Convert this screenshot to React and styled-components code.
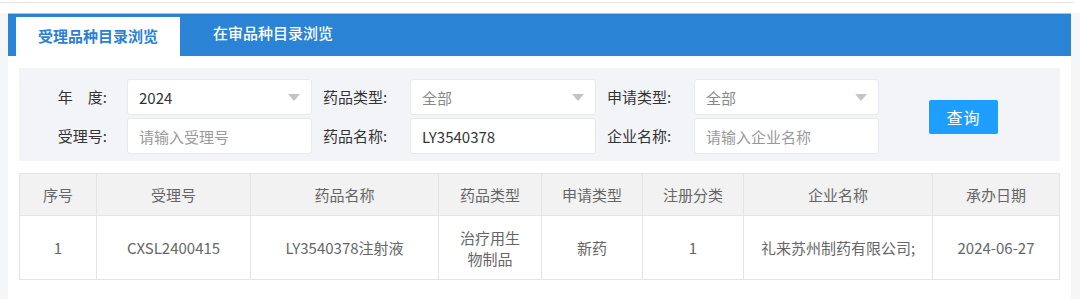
import React from "react";
import styled, { createGlobalStyle } from "styled-components";

const Global = createGlobalStyle`
  html, body { margin: 0; padding: 0; }
  body {
    background: #f5f6f8;
    font-family: "Noto Sans CJK SC", "Microsoft YaHei", sans-serif;
    font-size: 15px;
    color: #333;
  }
  * { box-sizing: border-box; }
`;

const Page = styled.div`
  width: 1080px;
  height: 299px;
  overflow: hidden;
  background: #f5f6f8;
`;

const TopStrip = styled.div`
  height: 13px;
  background: #fff;
  padding-top: 2px;
`;

const TopRule = styled.div`
  height: 1px;
  margin-right: 6px;
  background: #e4e4e4;
`;

const Panel = styled.div`
  margin: 0 9px 0 8px;
  background: #fff;
  height: 286px;
`;

const TabBar = styled.div`
  height: 43px;
  background: #2b83d5;
  border-top: 1px solid #9cc3ea;
  display: flex;
  align-items: flex-end;
  padding-left: 8px;
  gap: 11px;
`;

const Tab = styled.div`
  height: ${(p) => (p.$active ? "39px" : "42px")};
  padding: 0 22px;
  display: flex;
  align-items: center;
  font-size: 15px;
  line-height: 20px;
  padding-bottom: ${(p) => (p.$active ? "1px" : "4px")};
  background: ${(p) => (p.$active ? "#fff" : "transparent")};
  color: ${(p) => (p.$active ? "#2b7fd4" : "#fff")};
  font-weight: ${(p) => (p.$active ? 600 : 500)};
`;

const Body = styled.div`
  padding: 12px 11px 0 11px;
`;

const Filters = styled.div`
  background: #f3f4f8;
  padding: 11px 0 7px;
  display: grid;
  grid-template-columns: 108px 185px 98px 186px 98px 185px auto;
  grid-template-rows: 36px 36px;
  row-gap: 3px;
  align-items: center;
`;

const Label = styled.div`
  font-size: 15px;
  line-height: 20px;
  color: #333;
  white-space: nowrap;
  text-align: ${(p) => (p.$right ? "right" : "left")};
  padding: ${(p) => (p.$right ? "0 20px 0 0" : "0 0 0 11px")};
`;

const Field = styled.div`
  height: 36px;
  background: #fff;
  border: 1px solid #e8e9ee;
  border-radius: 3px;
  display: flex;
  align-items: center;
  padding: 0 11px;
  font-size: 15px;
  color: ${(p) => (p.$muted ? "#888" : "#333")};
  position: relative;
`;

const TextInput = styled.input`
  height: 36px;
  width: 100%;
  background: #fff;
  border: 1px solid #e8e9ee;
  border-radius: 3px;
  padding: 0 11px;
  font-family: inherit;
  font-size: 15px;
  color: #333;
  outline: none;
  &::placeholder { color: #9a9a9a; }
`;

const Caret = styled.span`
  position: absolute;
  right: 11px;
  top: 14px;
  width: 0;
  height: 0;
  border-left: 6.5px solid transparent;
  border-right: 6.5px solid transparent;
  border-top: 7px solid #c4c4c4;
`;

const SearchButton = styled.button`
  grid-column: 7;
  grid-row: 1 / span 2;
  align-self: center;
  margin-left: 50px;
  width: 69px;
  height: 34px;
  border: none;
  border-radius: 2px;
  background: #1e9fff;
  color: #fff;
  font-family: inherit;
  font-size: 16px;
  letter-spacing: 1px;
  margin-top: 1px;
`;

const Table = styled.table`
  margin-top: 12px;
  width: 1040px;
  border-collapse: collapse;
  table-layout: fixed;
  border: 1px solid #e4e4e4;
`;

const Th = styled.th`
  height: 42px;
  background: #f2f2f2;
  border: 1px solid #e4e4e4;
  font-weight: normal;
  font-size: 15px;
  color: #666;
  text-align: center;
  padding: 0;
`;

const Td = styled.td`
  height: 64px;
  border: 1px solid #e4e4e4;
  font-size: 15px;
  line-height: 21px;
  color: #666;
  text-align: center;
  padding: 0 16px;
`;

const widths = [77, 154, 188, 103, 101, 101, 189, 127];
const heads = ["序号", "受理号", "药品名称", "药品类型", "申请类型", "注册分类", "企业名称", "承办日期"];
const row = ["1", "CXSL2400415", "LY3540378注射液", "治疗用生物制品", "新药", "1", "礼来苏州制药有限公司;", "2024-06-27"];

function Select({ value, muted }) {
  return (
    <Field $muted={muted}>
      {value}
      <Caret />
    </Field>
  );
}

export default function App() {
  return (
    <Page>
      <Global />
      <TopStrip>
        <TopRule />
      </TopStrip>
      <Panel>
        <TabBar>
          <Tab $active>受理品种目录浏览</Tab>
          <Tab>在审品种目录浏览</Tab>
        </TabBar>
        <Body>
          <Filters>
            <Label $right>年　度:</Label>
            <Select value="2024" />
            <Label>药品类型:</Label>
            <Select value="全部" muted />
            <Label>申请类型:</Label>
            <Select value="全部" muted />
            <SearchButton>查询</SearchButton>
            <Label $right>受理号:</Label>
            <TextInput placeholder="请输入受理号" />
            <Label>药品名称:</Label>
            <TextInput defaultValue="LY3540378" />
            <Label>企业名称:</Label>
            <TextInput placeholder="请输入企业名称" />
          </Filters>
          <Table>
            <colgroup>
              {widths.map((w, i) => (
                <col key={i} style={{ width: w }} />
              ))}
            </colgroup>
            <thead>
              <tr>
                {heads.map((h) => (
                  <Th key={h}>{h}</Th>
                ))}
              </tr>
            </thead>
            <tbody>
              <tr>
                {row.map((c, i) => (
                  <Td key={i}>{c}</Td>
                ))}
              </tr>
            </tbody>
          </Table>
        </Body>
      </Panel>
    </Page>
  );
}
